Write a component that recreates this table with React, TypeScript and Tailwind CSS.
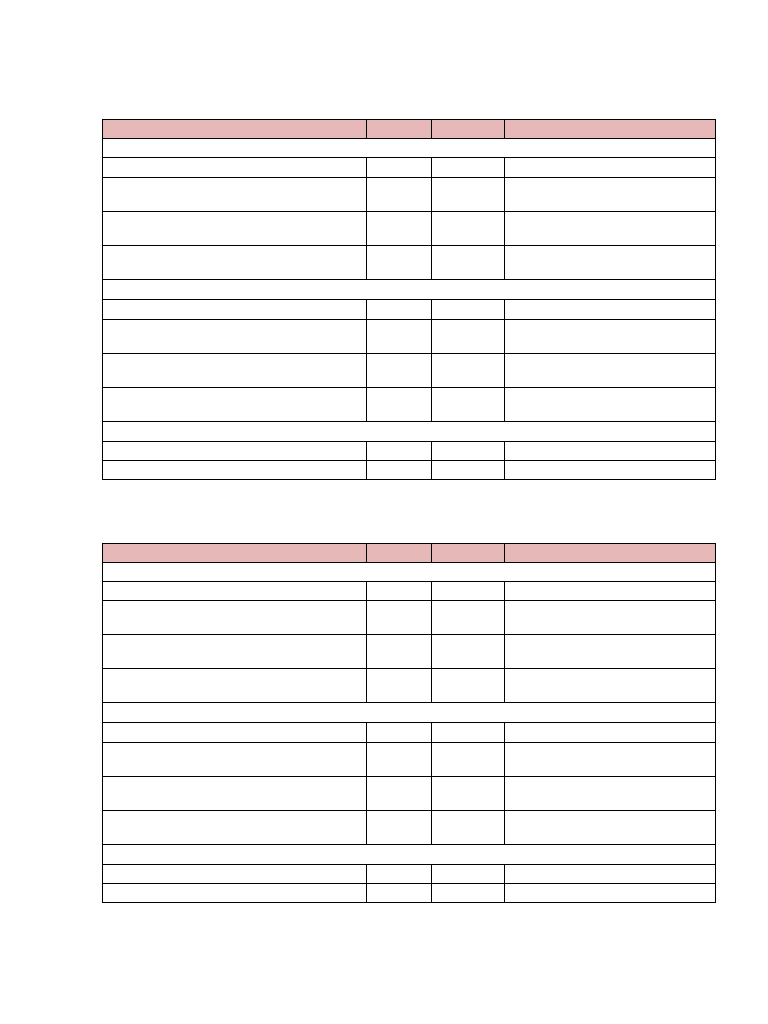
type Row = { kind: "head" | "section" | "row"; h: number };

const tableOne: Row[] = [
  { kind: "head", h: 19 },
  { kind: "section", h: 19 },
  { kind: "row", h: 20 },
  { kind: "row", h: 34 },
  { kind: "row", h: 34 },
  { kind: "row", h: 34 },
  { kind: "section", h: 20 },
  { kind: "row", h: 20 },
  { kind: "row", h: 34 },
  { kind: "row", h: 34 },
  { kind: "row", h: 34 },
  { kind: "section", h: 20 },
  { kind: "row", h: 19 },
  { kind: "row", h: 19 },
];

const tableTwo: Row[] = [
  { kind: "head", h: 19 },
  { kind: "section", h: 19 },
  { kind: "row", h: 19 },
  { kind: "row", h: 34 },
  { kind: "row", h: 34 },
  { kind: "row", h: 34 },
  { kind: "section", h: 20 },
  { kind: "row", h: 20 },
  { kind: "row", h: 34 },
  { kind: "row", h: 34 },
  { kind: "row", h: 34 },
  { kind: "section", h: 20 },
  { kind: "row", h: 19 },
  { kind: "row", h: 19 },
];

function SheetTable({ rows }: { rows: Row[] }) {
  return (
    <div className="w-[614px] border-t border-l border-r border-black">
      {rows.map((row, i) =>
        row.kind === "section" ? (
          <div key={i} className="border-b border-black" style={{ height: row.h }} />
        ) : (
          <div
            key={i}
            className={`grid grid-cols-[264px_65px_73px_210px] border-b border-black ${
              row.kind === "head" ? "bg-[#e6b9b8]" : "bg-white"
            }`}
            style={{ height: row.h }}
          >
            <div className="border-r border-black" />
            <div className="border-r border-black" />
            <div className="border-r border-black" />
            <div />
          </div>
        )
      )}
    </div>
  );
}

export default function App() {
  return (
    <div className="min-h-[1024px] w-[768px] bg-white pl-[102px] pt-[119px] font-['Liberation_Sans',sans-serif]">
      <div className="flex flex-col gap-[63px]">
        <SheetTable rows={tableOne} />
        <SheetTable rows={tableTwo} />
      </div>
    </div>
  );
}
